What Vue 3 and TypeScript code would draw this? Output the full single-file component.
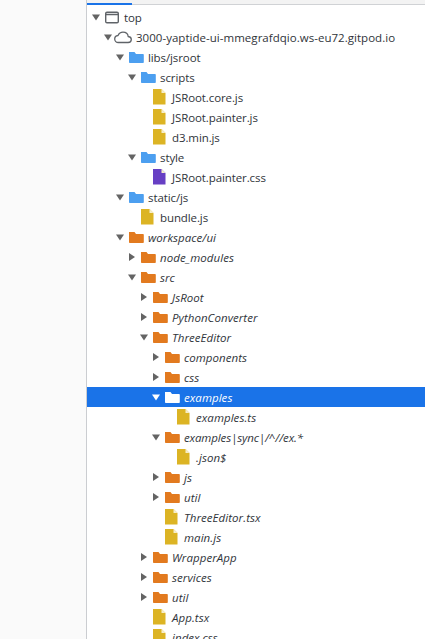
<script setup lang="ts">
interface Row { label: string; depth: number; kind: 'frame' | 'cloud' | 'blue' | 'orange' | 'white' | 'file' | 'css'; arrow?: 'down' | 'right'; italic?: boolean; selected?: boolean; spacing?: 'wide' | 'tight' }
const rows: Row[] = [
  { label: 'top', depth: 0, kind: 'frame', arrow: 'down' },
  { label: '3000-yaptide-ui-mmegrafdqio.ws-eu72.gitpod.io', depth: 1, kind: 'cloud', arrow: 'down', spacing: 'wide' },
  { label: 'libs/jsroot', depth: 2, kind: 'blue', arrow: 'down' },
  { label: 'scripts', depth: 3, kind: 'blue', arrow: 'down' },
  { label: 'JSRoot.core.js', depth: 4, kind: 'file' },
  { label: 'JSRoot.painter.js', depth: 4, kind: 'file' },
  { label: 'd3.min.js', depth: 4, kind: 'file' },
  { label: 'style', depth: 3, kind: 'blue', arrow: 'down' },
  { label: 'JSRoot.painter.css', depth: 4, kind: 'css' },
  { label: 'static/js', depth: 2, kind: 'blue', arrow: 'down' },
  { label: 'bundle.js', depth: 3, kind: 'file' },
  { label: 'workspace/ui', depth: 2, kind: 'orange', arrow: 'down', italic: true },
  { label: 'node_modules', depth: 3, kind: 'orange', arrow: 'right', italic: true },
  { label: 'src', depth: 3, kind: 'orange', arrow: 'down', italic: true },
  { label: 'JsRoot', depth: 4, kind: 'orange', arrow: 'right', italic: true },
  { label: 'PythonConverter', depth: 4, kind: 'orange', arrow: 'right', italic: true },
  { label: 'ThreeEditor', depth: 4, kind: 'orange', arrow: 'down', italic: true },
  { label: 'components', depth: 5, kind: 'orange', arrow: 'right', italic: true },
  { label: 'css', depth: 5, kind: 'orange', arrow: 'right', italic: true },
  { label: 'examples', depth: 5, kind: 'white', arrow: 'down', italic: true, selected: true },
  { label: 'examples.ts', depth: 6, kind: 'file', italic: true },
  { label: 'examples|sync|/^//ex.*', depth: 5, kind: 'orange', arrow: 'down', italic: true, spacing: 'tight' },
  { label: '.json$', depth: 6, kind: 'file', italic: true },
  { label: 'js', depth: 5, kind: 'orange', arrow: 'right', italic: true },
  { label: 'util', depth: 5, kind: 'orange', arrow: 'right', italic: true },
  { label: 'ThreeEditor.tsx', depth: 5, kind: 'file', italic: true },
  { label: 'main.js', depth: 5, kind: 'file', italic: true },
  { label: 'WrapperApp', depth: 4, kind: 'orange', arrow: 'right', italic: true },
  { label: 'services', depth: 4, kind: 'orange', arrow: 'right', italic: true },
  { label: 'util', depth: 4, kind: 'orange', arrow: 'right', italic: true },
  { label: 'App.tsx', depth: 4, kind: 'file', italic: true },
  { label: 'index.css', depth: 4, kind: 'file', italic: true },
]
const folderColor = (k: string) => (k === 'blue' ? '#4c9ff0' : k === 'white' ? '#ffffff' : '#e27a1f')
const isFolder = (k: string) => k === 'blue' || k === 'orange' || k === 'white'
</script>

<template>
  <div class="page">
    <div class="gutter"></div>
    <div class="panel">
      <div class="tabline"><div class="tabmark"></div></div>
      <ul class="tree">
        <li
          v-for="(r, i) in rows"
          :key="i"
          class="row"
          :class="{ selected: r.selected }"
          :style="{ paddingLeft: 4 + r.depth * 12 + 'px' }"
        >
          <span class="arrowbox">
            <svg v-if="r.arrow === 'down'" width="10" height="10" viewBox="0 0 10 10"><path class="arrow" d="M1 2.500h8L5 8.500z" /></svg>
            <svg v-else-if="r.arrow === 'right'" width="10" height="10" viewBox="0 0 10 10"><path class="arrow" d="M2 1v8l6-4z" /></svg>
          </span>
          <svg v-if="r.kind === 'frame'" class="icon" width="16" height="16" viewBox="0 0 16 16">
            <rect x="1.700" y="3.200" width="12.600" height="10.600" rx="1.300" fill="none" stroke="#5f6368" stroke-width="1.400" />
            <path d="M2 5.500h12" stroke="#5f6368" stroke-width="1.500" />
          </svg>
          <svg v-else-if="r.kind === 'cloud'" class="icon cloud" width="18" height="16" viewBox="0 0 18 16">
            <path d="M4.400 13.500C2.300 13.500.7 11.900.7 10c0-1.800 1.400-3.300 3.300-3.500C4.900 4.500 6.800 3.200 9 3.200c2.700 0 4.900 1.900 5.200 4.300 1.800.2 3.100 1.500 3.100 3 0 1.700-1.400 3-3.200 3z" fill="none" stroke="#5f6368" stroke-width="1.300" />
          </svg>
          <svg v-else-if="isFolder(r.kind)" class="icon" width="16" height="16" viewBox="0 0 16 16">
            <path d="M1 3h5.500L8 5h7a.8.800 0 0 1 .8.800v7.400a.8.800 0 0 1-.8.800H1.800a.8.800 0 0 1-.8-.8z" :fill="folderColor(r.kind)" />
          </svg>
          <svg v-else class="icon" width="16" height="16" viewBox="0 0 16 16">
            <path d="M1 0h8.500L13.500 4v11.500H1z" :fill="r.kind === 'css' ? '#673fc4' : '#dcb424'" />
            <path d="M9.500 0l4 4h-4z" fill="#f6eecb" />
          </svg>
          <span class="label" :class="[{ italic: r.italic }, r.spacing]">{{ r.label }}</span>
        </li>
      </ul>
    </div>
  </div>
</template>

<style>
html, body { margin: 0; background: #fff; overflow: hidden; }
</style>

<style scoped>
.page { display: flex; width: 425px; height: 639px; overflow: hidden; font-family: "Open Sans", "Noto Sans", sans-serif; }
.gutter { width: 86px; flex: none; background: #fafafa; }
.panel { flex: 1; min-width: 0; border-left: 1px solid #cbcdd1; background: #fff; }
.tabline { height: 4px; border-bottom: 1px solid #d0d2d5; background: #f3f3f3; }
.tabmark { width: 45px; height: 2px; margin-top: 0; transform: translateY(3px); background: #1a73e8; }
.tree { list-style: none; margin: 0; padding: 2px 0 0; }
.row { display: flex; align-items: center; height: 20px; box-sizing: border-box; white-space: nowrap; }
.row.selected { background: #1a73e8; }
.row.selected .label { color: #fff; }
.row.selected .arrow { fill: #fff; }
.arrowbox { width: 13px; height: 10px; flex: none; display: flex; align-items: center; }
.arrow { fill: #646464; }
.icon { flex: none; margin-right: 4px; }
.cloud { margin-left: -2px; }
.label { font-size: 11.5px; letter-spacing: -0.1px; color: #30343a; }
.italic { font-style: italic; letter-spacing: 0.05px; }
.wide { letter-spacing: 0.03px; }
.tight { letter-spacing: -0.13px; }
</style>
